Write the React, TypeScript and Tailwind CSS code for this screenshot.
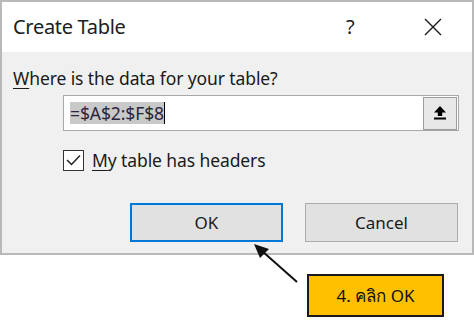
import React from "react";

function UploadIcon() {
  return (
    <svg width="14" height="14" viewBox="0 0 14 14">
      <path d="M7 0 L13 6.5 L9.2 6.5 L9.2 10 L4.8 10 L4.8 6.5 L1 6.5 Z" fill="#000" />
      <rect x="1" y="11.5" width="12" height="2" fill="#000" />
    </svg>
  );
}

export default function App() {
  return (
    <div
      className="relative w-[474px] h-[327px] bg-white overflow-hidden text-[#1a1a1a]"
      style={{ fontFamily: '"Noto Sans", "Open Sans", sans-serif' }}
    >
      <div className="flex flex-col h-[255px] border-2 border-[#b9b9b9]">
        {/* title bar */}
        <div className="flex items-center h-[50px] bg-white pl-[11px]">
          <span className="text-[20px] leading-none tracking-[-0.3px] text-[#202020]">Create Table</span>
          <span className="ml-auto text-[20px] leading-none text-[#202020] w-[14px] mr-[64px]">?</span>
          <svg width="18" height="18" viewBox="0 0 18 18" className="mr-[30px]">
            <path d="M1 1 L17 17 M17 1 L1 17" stroke="#1a1a1a" strokeWidth="1.4" />
          </svg>
        </div>

        {/* body */}
        <div className="flex-1 bg-[#f0f0f0] flex flex-col pl-[11px] pr-[13px] pt-[14px]">
          <div className="text-[17.5px] leading-[24px] tracking-[-0.1px]">
            <span className="underline underline-offset-[3px]">W</span>here is the data for your table?
          </div>

          <div className="ml-[50px] mt-[5px] h-[36px] border border-[#a8a8a8] bg-white flex items-center pl-[6px] pr-[1px]">
            <span className="relative bg-[#c9c9c9] text-[17.5px] leading-[22px] text-[#2b2540] tracking-[-0.1px]">
              =$A$2:$F$8
              <span className="absolute right-[-1px] top-0 w-[1px] h-[22px] bg-black" />
            </span>
            <div className="ml-auto w-[34px] h-[33px] border border-[#9c9c9c] bg-[#e8e8e8] flex items-center justify-center">
              <UploadIcon />
            </div>
          </div>

          <div className="flex items-center ml-[50px] mt-[17px]">
            <div className="w-[21px] h-[21px] border border-[#333] bg-white flex items-center justify-center">
              <svg width="15" height="12" viewBox="0 0 15 12">
                <path d="M1 6 L5.5 10.5 L14 1.5" stroke="#222" strokeWidth="1.5" fill="none" />
              </svg>
            </div>
            <span className="ml-[8px] text-[17.5px] leading-[24px] tracking-[-0.1px]">
              <span className="underline underline-offset-[3px]">M</span>y table has headers
            </span>
          </div>

          <div className="flex ml-[117px] mt-[31px] gap-[22px]">
            <button className="w-[153px] h-[39px] border-2 border-[#0078d7] bg-[#e1e1e1] text-[17px] text-[#1a1a1a]">
              OK
            </button>
            <button className="w-[153px] h-[39px] border border-[#adadad] bg-[#e1e1e1] text-[17px] text-[#1a1a1a]">
              Cancel
            </button>
          </div>
        </div>
      </div>

      {/* callout */}
      <div className="flex justify-end pr-[30px] mt-[19px]">
        <div className="w-[137px] h-[43px] bg-[#ffc000] border-2 border-[#1a1a1a] flex items-center justify-center text-[17px] text-[#111]">
          4. คลิก OK
        </div>
      </div>

      {/* arrow pointing to OK */}
      <svg className="absolute left-0 top-0 pointer-events-none" width="474" height="327">
        <line x1="297" y1="282" x2="262" y2="251" stroke="#111" strokeWidth="2" />
        <path d="M254 244 L269 249 L260 258 Z" fill="#111" />
      </svg>
    </div>
  );
}
